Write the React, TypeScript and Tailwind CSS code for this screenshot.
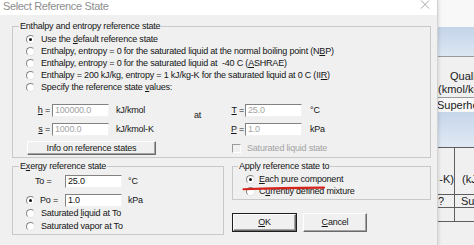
import type { ReactNode } from 'react'

function U({ children }: { children: ReactNode }) {
  return <span className="underline decoration-[1px] underline-offset-[1px]">{children}</span>
}

function Radio({ on = false }: { on?: boolean }) {
  return (
    <span className="flex h-[9px] w-[9px] shrink-0 items-center justify-center rounded-full border border-t-[#858585] border-l-[#858585] border-r-[#e4e4e4] border-b-[#e4e4e4] bg-white">
      {on && <span className="h-[3px] w-[3px] rounded-full bg-[#111]" />}
    </span>
  )
}

function Opt({ on = false, tall = false, children }: { on?: boolean; tall?: boolean; children: ReactNode }) {
  return (
    <div className={`flex items-center gap-[6px] ${tall ? 'h-[13px]' : 'h-[12px]'}`}>
      <Radio on={on} />
      <span className="whitespace-nowrap">{children}</span>
    </div>
  )
}

function Field({ value, dim = false }: { value: string; dim?: boolean }) {
  return (
    <div
      className={`flex h-[13px] w-[57px] shrink-0 items-center border border-t-[#828282] border-l-[#828282] border-r-[#f2f2f2] border-b-[#f2f2f2] bg-white pl-[2px] ${
        dim ? 'text-[#a3a3a3]' : 'text-[#111]'
      }`}
    >
      {value}
    </div>
  )
}

function Raised({ className, children }: { className: string; children: ReactNode }) {
  return (
    <div
      className={`flex items-center justify-center border border-t-white border-l-white border-r-[#6a6a6a] border-b-[#6a6a6a] bg-[#f0f0f0] shadow-[inset_-1px_-1px_0_#a3a3a3] ${className}`}
    >
      {children}
    </div>
  )
}

export default function App() {
  return (
    <div className="flex h-[245px] w-[474px] overflow-hidden bg-[#f0f0f0] font-['Liberation_Sans',Arial,sans-serif] text-[9px] leading-[11px] tracking-[-0.2px] text-[#151515]">
      {/* dialog */}
      <div className="relative z-10 flex w-[438px] shrink-0 flex-col border-r border-[#d2d2d2] shadow-[1px_0_3px_rgba(0,0,0,0.12)]">
        <div className="flex h-[15px] shrink-0 items-start justify-between bg-white pl-[3px] pr-[7px]">
          <span className="text-[11px] leading-[12px] tracking-[-0.35px] text-[#8e8e8e]">Select Reference State</span>
          <svg width="10" height="9" viewBox="0 0 10 9" className="-mt-[0.5px]">
            <path d="M1 0.5 L9 8.5 M9 0.5 L1 8.5" stroke="#9c9c9c" strokeWidth="0.9" fill="none" />
          </svg>
        </div>

        <div className="flex flex-1 flex-col pl-[12px] pr-[6px] pt-[6px]">
          <fieldset className="border border-[#c9c9c9] pb-[2px]">
            <legend className="ml-[6px] px-[1px]">Enthalpy and entropy reference state</legend>
            <div className="flex flex-col pl-[13px] pt-[1px]">
              <Opt on>
                Use the <U>d</U>efault reference state
              </Opt>
              <Opt>
                Enthalpy, entropy = 0 for the saturated liquid at the normal boiling point (N<U>B</U>P)
              </Opt>
              <Opt>
                Enthalpy, entropy = 0 for the saturated liquid at {'\u00a0'}-40 C (<U>A</U>SHRAE)
              </Opt>
              <Opt>
                Enthalpy = 200 kJ/kg, entropy = 1 kJ/kg-K for the saturated liquid at 0 C (II<U>R</U>)
              </Opt>
              <Opt>
                Specify the reference state <U>v</U>alues:
              </Opt>
            </div>

            <div className="mt-[11px] flex pl-[14px]">
              <div className="flex w-[167px] flex-col">
                <div className="flex h-[13px] items-center">
                  <span className="w-[25px] pr-[2px] text-right">
                    <U>h</U> =
                  </span>
                  <Field value="100000.0" dim />
                  <span className="ml-[7px]">kJ/kmol</span>
                </div>
                <div className="mt-[6px] flex h-[13px] items-center">
                  <span className="w-[25px] pr-[2px] text-right">
                    <U>s</U> =
                  </span>
                  <Field value="1000.0" dim />
                  <span className="ml-[7px]">kJ/kmol-K</span>
                </div>
                <Raised className="mt-[5px] h-[14px] w-[129px]">Info on reference states</Raised>
              </div>

              <div className="w-[36px] pt-[6px]">at</div>

              <div className="flex flex-col">
                <div className="flex h-[13px] items-center">
                  <span className="w-[15px] pr-[1px] text-right">
                    <U>T</U> =
                  </span>
                  <Field value="25.0" dim />
                  <span className="ml-[8px]">°C</span>
                </div>
                <div className="mt-[6px] flex h-[13px] items-center">
                  <span className="w-[15px] pr-[1px] text-right">
                    <U>P</U> =
                  </span>
                  <Field value="1.0" dim />
                  <span className="ml-[8px]">kPa</span>
                </div>
                <div className="mt-[6px] flex h-[12px] items-center gap-[6px] pl-[2px] text-[#a3a3a3]">
                  <span className="h-[9px] w-[9px] border border-t-[#9a9a9a] border-l-[#9a9a9a] border-r-white border-b-white bg-[#f0f0f0]" />
                  <span>Saturated liquid state</span>
                </div>
              </div>
            </div>
          </fieldset>

          <div className="mt-[3px] flex gap-[8px]">
            <fieldset className="w-[212px] border border-[#c9c9c9]">
              <legend className="ml-[6px] px-[1px]">
                E<U>x</U>ergy reference state
              </legend>
              <div className="flex flex-col pb-[1px] pl-[13px] pt-[3px]">
                <div className="flex h-[13px] items-center pl-[9px]">
                  <span className="w-[30px]">To =</span>
                  <Field value="25.0" />
                  <span className="ml-[6px]">°C</span>
                </div>
                <div className="mt-[6px] flex h-[13px] items-center">
                  <Radio on />
                  <span className="ml-[5px] w-[25px]">Po =</span>
                  <Field value="1.0" />
                  <span className="ml-[6px]">kPa</span>
                </div>
                <Opt tall>
                  Saturated <U>l</U>iquid at To
                </Opt>
                <Opt tall>Saturated vapor at To</Opt>
              </div>
            </fieldset>

            <div className="flex w-[199px] flex-col">
              <fieldset className="border border-[#c9c9c9]">
                <legend className="ml-[5px] px-[1px]">Apply reference state to</legend>
                <div className="flex flex-col pb-[1px] pl-[13px] pt-[1.5px]">
                  <div className="relative flex h-[12px] items-center gap-[4px]">
                    <Radio on />
                    <span>
                      <U>E</U>ach pure component
                    </span>
                    <svg width="84" height="5" viewBox="0 0 84 5" className="absolute left-[-4px] top-[12px] z-10">
                      <path d="M1.5 3.2 C 20 2.6, 50 1.9, 82 1.6" stroke="#d8231b" strokeWidth="2.1" strokeLinecap="round" fill="none" />
                    </svg>
                  </div>
                  <div className="flex h-[12px] items-center gap-[4px]">
                    <Radio />
                    <span>
                      C<U>u</U>rrently defined mixture
                    </span>
                  </div>
                </div>
              </fieldset>

              <div className="mt-[13px] flex gap-[6px]">
                <div className="h-[19px] w-[65px] border border-[#1e1e1e]">
                  <Raised className="h-full w-full">
                    <U>O</U>K
                  </Raised>
                </div>
                <Raised className="h-[19px] w-[64px]">
                  <U>C</U>ancel
                </Raised>
              </div>
            </div>
          </div>
        </div>
      </div>

      {/* window behind the dialog */}
      <div className="flex min-w-0 flex-1 flex-col overflow-hidden whitespace-nowrap text-[11px] leading-[13px] tracking-normal text-[#1a1a1a]">
        <div className="h-[27px] shrink-0 bg-[#f8f8f8]" />
        <div className="h-[29px] shrink-0 bg-gradient-to-b from-[#c4d4e9] to-[#dde7f3]" />
        <div className="h-[1px] shrink-0 bg-[#9a9a9a]" />
        <div className="flex h-[40px] shrink-0 flex-col bg-[#f0f0f0] pt-[13px]">
          <span className="pl-[12px]">Quality</span>
          <span>(kmol/kg)</span>
        </div>
        <div className="h-[1px] shrink-0 bg-[#9a9a9a]" />
        <div className="flex h-[14px] shrink-0 items-start bg-[#f8f8f8] pt-[1px]">
          <span className="-ml-[1px]">Superheated</span>
        </div>
        <div className="h-[35px] shrink-0 bg-gradient-to-b from-[#c6d6ea] to-[#e0e9f4]" />
        <div className="flex flex-col border-t border-[#5e5e5e] bg-[#f0f0f0]">
          <div className="flex h-[47px] border-b border-[#5e5e5e]">
            <div className="flex w-[17px] shrink-0 items-end justify-end overflow-hidden border-r border-[#5e5e5e] pb-[8px]">
              <span>-K)</span>
            </div>
            <div className="flex items-end pb-[8px] pl-[7px]">(kJ/kg)</div>
          </div>
          <div className="flex h-[13px] border-b border-[#5e5e5e]">
            <div className="w-[17px] shrink-0 overflow-hidden border-r border-[#5e5e5e]">?</div>
            <div className="pl-[6px]">Superheated</div>
          </div>
          <div className="flex h-[14px] border-b border-[#5e5e5e]">
            <div className="w-[17px] shrink-0 border-r border-[#5e5e5e]" />
          </div>
        </div>
      </div>
    </div>
  )
}
